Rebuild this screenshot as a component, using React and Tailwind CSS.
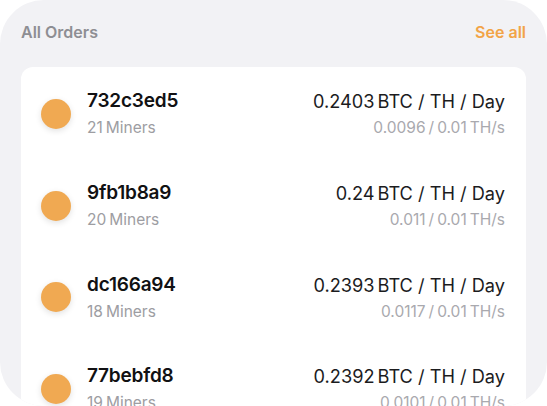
import React from 'react';

const orders = [
  { id: '732c3ed5', miners: 21, price: '0.2403', speed: '0.0096' },
  { id: '9fb1b8a9', miners: 20, price: '0.24', speed: '0.011' },
  { id: 'dc166a94', miners: 18, price: '0.2393', speed: '0.0117' },
  { id: '77bebfd8', miners: 19, price: '0.2392', speed: '0.0101' },
];

function OrderRow({ order }) {
  return (
    <div className="h-[91.7px] shrink-0 flex items-center pl-[20px] pr-[21px]">
      <div className="w-[30px] h-[30px] rounded-full bg-[#f0a952] shadow-[0_2px_6px_rgba(0,0,0,0.12)] shrink-0" />
      <div className="ml-[16px] flex flex-col">
        <div className="text-[19px] leading-[24px] font-semibold text-[#111113] tracking-[-0.2px]">{order.id}</div>
        <div className="mt-[5px] text-[15.5px] leading-[20px] text-[#9d9da2]">
          {order.miners}<span className="ml-[3px]">Miners</span>
        </div>
      </div>
      <div className="ml-auto flex flex-col items-end">
        <div className="text-[18.2px] leading-[24px] text-[#1c1c1e]">
          {order.price}<span className="ml-[3px]">BTC / TH / Day</span>
        </div>
        <div className="mt-[5px] text-[15.5px] leading-[20px] text-[#a9a9ae]">
          {order.speed}<span className="mx-[3px]">/</span>0.01<span className="ml-[3px]">TH/s</span>
        </div>
      </div>
    </div>
  );
}

export default function App() {
  return (
    <div className="w-[547px] h-[406px] bg-white overflow-hidden" style={{ fontFamily: 'Inter, "Noto Sans", sans-serif' }}>
      <div className="h-[406px] bg-[#f2f2f5] rounded-[44px] overflow-hidden flex flex-col px-[21px]">
        <div className="shrink-0 flex items-center justify-between h-[67px] pb-[3px]">
          <span className="text-[16px] font-semibold text-[#8e8e93]">All Orders</span>
          <span className="text-[16px] font-semibold text-[#f2a447]">See all</span>
        </div>
        <div className="bg-white rounded-[12px] flex flex-col pt-[1px] h-[400px] shrink-0">
          {orders.map((o) => (
            <OrderRow key={o.id} order={o} />
          ))}
        </div>
      </div>
    </div>
  );
}
